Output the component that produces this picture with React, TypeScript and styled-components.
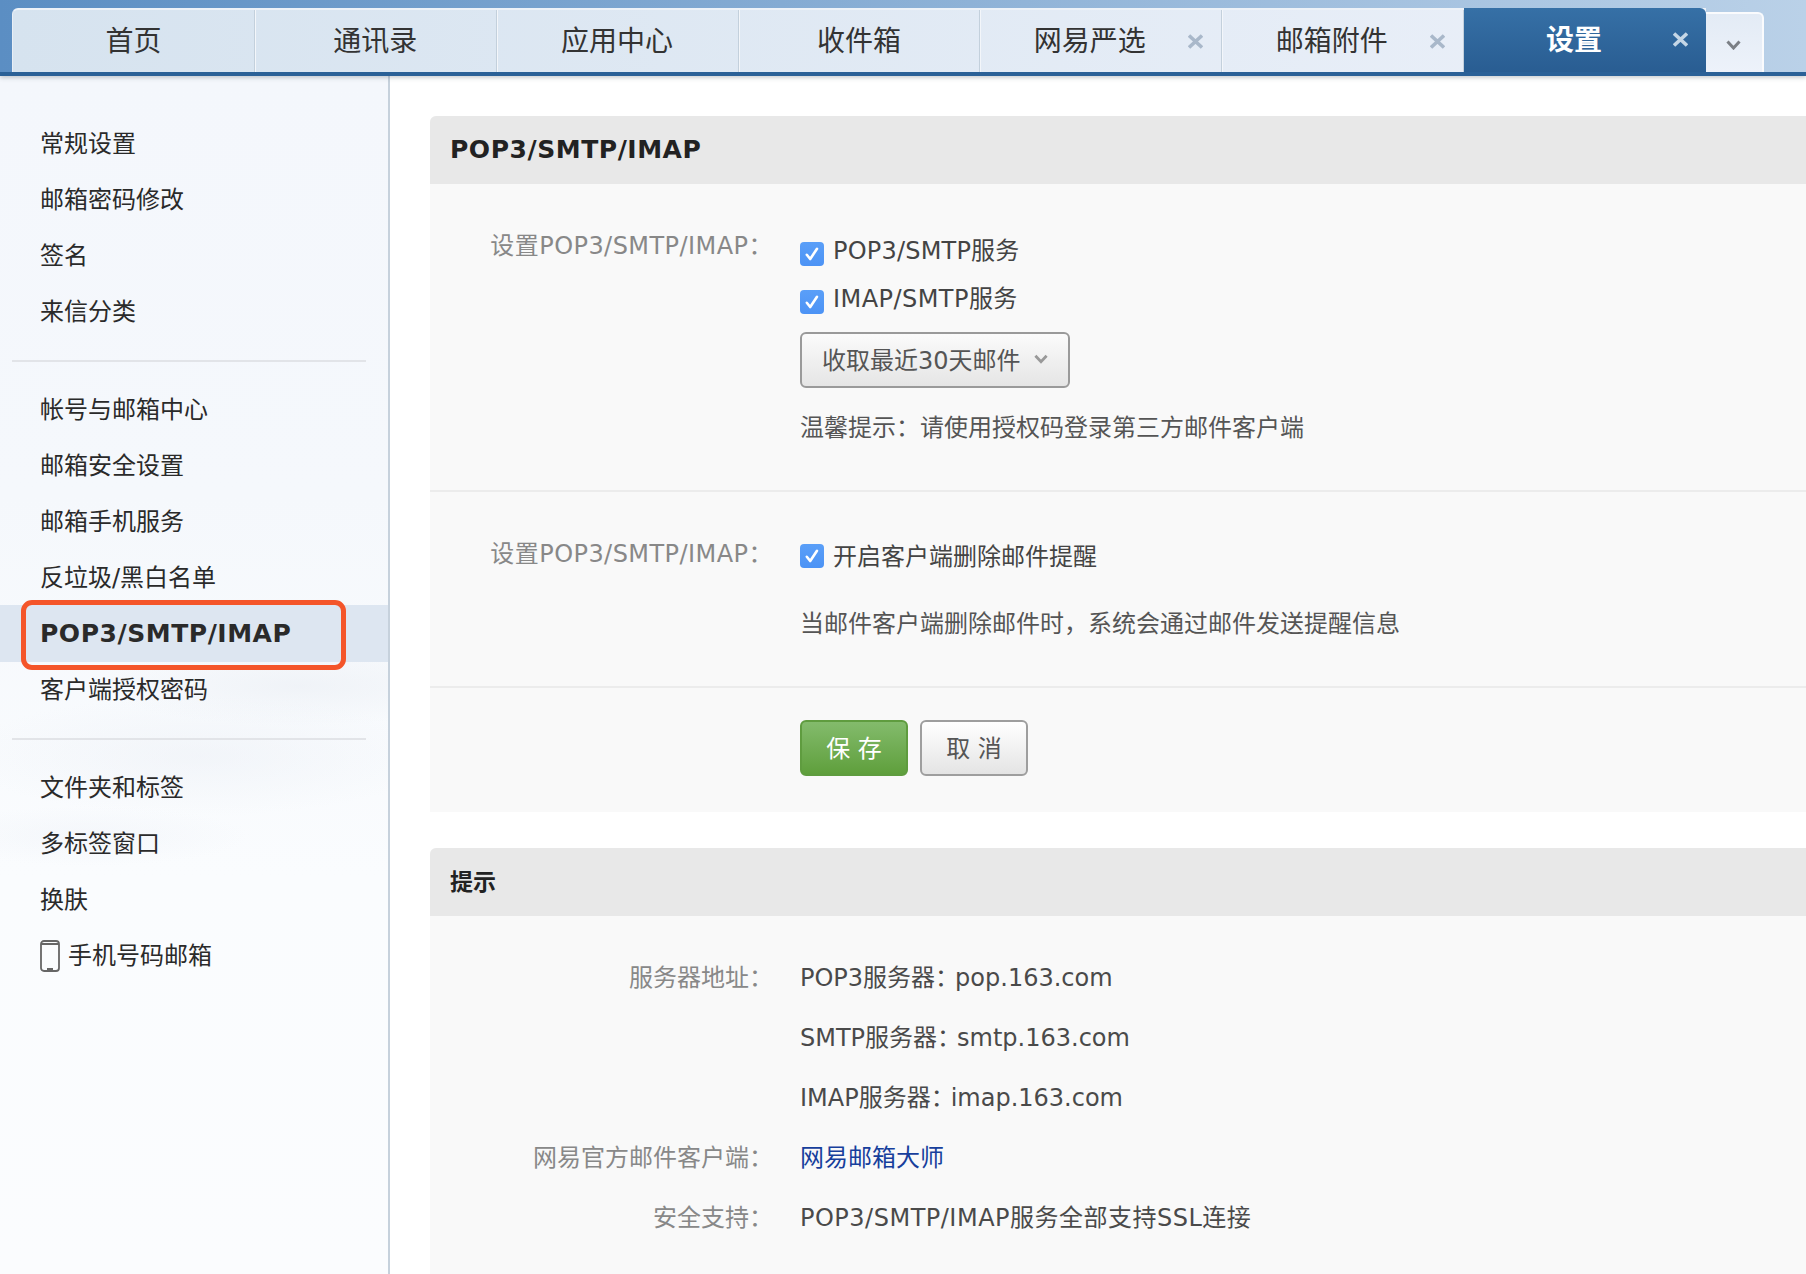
import React from "react";
import styled, { createGlobalStyle } from "styled-components";

const Global = createGlobalStyle`
  html, body { margin: 0; padding: 0; background: #fff; }
  body {
    width: 1806px; height: 1274px; overflow: hidden;
    font-family: "DejaVu Sans", "Noto Sans CJK SC", sans-serif;
    font-size: 24px; color: #333;
  }
  * { box-sizing: border-box; }
`;

const Page = styled.div`
  width: 1806px; height: 1274px; display: flex; flex-direction: column; overflow: hidden;
`;

const TopBar = styled.header`
  flex: none; height: 76px; padding: 8px 0 0 12px; display: flex; align-items: flex-end;
  background: linear-gradient(to right, #5b8ec3, #bad1e8);
  border-bottom: 4px solid #2b6197;
  box-shadow: 0 2px 4px rgba(60, 70, 80, .25);
  position: relative; z-index: 2;
`;

const TabStrip = styled.nav`
  display: flex; height: 64px;
  background: linear-gradient(to right, #d6e3ef, #ebf0f9);
  border-top: 2px solid #edf2f8;
  border-left: 1px solid #e8eef5;
  border-radius: 6px 0 0 0;
`;

const Tab = styled.div<{ $active?: boolean; $closable?: boolean }>`
  width: 241.85px; height: ${p => (p.$active ? "64px" : "62px")};
  margin-top: ${p => (p.$active ? "-2px" : "0")};
  display: flex; align-items: center; justify-content: center; position: relative;
  padding-right: ${p => (p.$closable ? "22px" : "0")};
  font-size: 28px; padding-bottom: 4px;
  font-weight: ${p => (p.$active ? 700 : 400)};
  color: ${p => (p.$active ? "#fff" : "#333")};
  background: ${p => (p.$active ? "linear-gradient(#3670a6, #295d92)" : "transparent")};
  border-radius: ${p => (p.$active ? "0 6px 0 0" : "0")};
  border-right: ${p => (p.$active ? "none" : "1px solid #c3d0dc")};
  box-shadow: ${p => (p.$active ? "none" : "1px 0 0 #f3f6fa")};
`;

const CloseIcon = styled.svg`
  position: absolute; right: 18px; top: 24px; width: 15px; height: 15px;
`;

const MoreTab = styled.div`
  width: 58px; height: 60px; display: flex; align-items: center; justify-content: center;
  padding: 4px 0 0 0;
  background: linear-gradient(#e3ebf5, #edf2fa);
  border-top: 2px solid #fafbfd; border-right: 2px solid #fafbfd;
  border-radius: 0 6px 0 0;
`;

const Body = styled.div`
  flex: 1; display: flex; min-height: 0;
`;

const Sidebar = styled.aside`
  flex: none; width: 390px; padding-top: 39px;
  border-right: 2px solid #c6d1dc;
  background:
    radial-gradient(ellipse 200px 40px at 300px 610px, rgba(232,236,242,.5), transparent),
    radial-gradient(ellipse 240px 60px at 200px 680px, rgba(234,238,244,.45), transparent),
    radial-gradient(ellipse 160px 30px at 90px 760px, rgba(236,240,246,.4), transparent),
    linear-gradient(#f4f7fc 0, #f5f8fc 420px, #fafcfe 800px, #fbfcfe 100%);
`;

const NavItem = styled.div<{ $selected?: boolean }>`
  height: 56px; display: flex; align-items: center; padding-left: 40px; position: relative;
  color: #2a2a2a;
  font-weight: ${p => (p.$selected ? 700 : 400)};
  background: ${p => (p.$selected ? "#dde6f1" : "transparent")};
  box-shadow: ${p => (p.$selected ? "0 1px 0 #dde6f1" : "none")};
  font-size: ${p => (p.$selected ? "25px" : "24px")};
  letter-spacing: ${p => (p.$selected ? ".55px" : "0")};
  padding-bottom: ${p => (p.$selected ? "0" : "4px")};
`;

const Highlight = styled.div`
  position: absolute; left: 21px; top: -5px; width: 325px; height: 70px;
  border: 5.5px solid #f4552a; border-radius: 11px;
`;

const PhoneIcon = styled.svg`
  width: 20px; height: 32px; margin-right: 8px; flex: none; margin-top: 6px;
`;

const NavDivider = styled.div`
  height: 2px; margin: 21px 22px 19px 12px; background: #e2e4e8;
`;

const Main = styled.main`
  flex: 1; min-width: 0; padding: 40px 0 0 40px; background: #fff; display: flex; flex-direction: column;
`;

const Panel = styled.section<{ $fill?: boolean }>`
  background: #f9f9f9; border-radius: 6px 0 0 0; overflow: hidden;
  flex: ${p => (p.$fill ? "1" : "none")};
  & + & { margin-top: 36px; }
`;

const PanelHead = styled.h2<{ $small?: boolean }>`
  margin: 0; height: 68px; display: flex; align-items: center; padding: 0 0 ${p => (p.$small ? "4px" : "2px")} 20px;
  background: #e8e8e8; color: #222; font-weight: 700;
  font-size: ${p => (p.$small ? "23px" : "25px")};
  letter-spacing: ${p => (p.$small ? "0" : ".55px")};
`;

const Section = styled.div<{ $bottom: number }>`
  padding: 36px 0 ${p => p.$bottom}px;
  border-bottom: 2px solid #ececec;
`;

const FormRow = styled.div`
  display: grid; grid-template-columns: 343px 1fr; column-gap: 27px;
`;

const Label = styled.div`
  line-height: 52px; text-align: right; color: #888; white-space: nowrap; letter-spacing: .45px;
`;

const Controls = styled.div<{ $top: number }>`
  padding-top: ${p => p.$top}px; color: #4a4a4a;
`;

const CheckRow = styled.label<{ $lift: number; $tracking?: number }>`
  display: flex; align-items: center; height: 48px; gap: 9px; color: #444;
  & > span {
    margin-bottom: ${p => p.$lift}px;
    letter-spacing: ${p => p.$tracking ?? 0}px;
  }
`;

const CheckBox = styled.i`
  width: 24px; height: 24px; flex: none; display: flex; align-items: center; justify-content: center;
  background: linear-gradient(#5a9ff8, #4c93f5); border-radius: 4px;
`;

const Select = styled.div`
  width: 270px; height: 56px; margin-top: 6px; padding: 0 0 3px 20px; display: flex; align-items: center; gap: 13px;
  border: 2px solid #9a9a9a; border-radius: 6px; color: #555;
  background: linear-gradient(#fbfbfb, #e5e5e5);
`;

const Note = styled.p<{ $gap: number }>`
  margin: ${p => p.$gap}px 0 0; line-height: 50px; color: #555;
`;

const Actions = styled.div`
  display: flex; gap: 12px; padding: 32px 0 36px 370px;
`;

const Btn = styled.div<{ $primary?: boolean }>`
  width: 108px; height: 56px; display: flex; align-items: center; justify-content: center;
  border-radius: 6px; white-space: pre; padding-bottom: 3px;
  color: ${p => (p.$primary ? "#fff" : "#555")};
  border: 2px solid ${p => (p.$primary ? "#5f9c3f" : "#9e9e9e")};
  background: ${p => (p.$primary ? "linear-gradient(#83bb6c, #5f9f3c)" : "linear-gradient(#fff, #e4e4e4)")};
`;

const InfoBody = styled.div`
  padding-top: 29px;
`;

const InfoRow = styled.div`
  display: grid; grid-template-columns: 343px 1fr; column-gap: 27px; height: 60px; align-items: center;
`;

const InfoLabel = styled.div`
  color: #888; text-align: right; white-space: nowrap;
`;

const InfoValue = styled.div<{ $tracking?: number }>`
  color: #4a4a4a; white-space: nowrap; letter-spacing: ${p => p.$tracking ?? 0}px;
`;

const TightColon = styled.span`
  letter-spacing: -4px;
`;

const LinkText = styled.a`
  color: #173f9c; text-decoration: none;
`;

const Close = ({ color }: { color: string }) => (
  <CloseIcon viewBox="0 0 15 15">
    <path d="M1 1.5 L14 13.5 M14 1.5 L1 13.5" stroke={color} strokeWidth="3.6" fill="none" />
  </CloseIcon>
);

const Check = () => (
  <svg width="16" height="16" viewBox="0 0 16 16">
    <path d="M2.8 8.8 L6.2 13 L13 2.8" stroke="#fff" strokeWidth="2.6" fill="none" strokeLinecap="round" strokeLinejoin="round" />
  </svg>
);

const Chevron = ({ color, w, h }: { color: string; w: number; h: number }) => (
  <svg width={w} height={h} viewBox="0 0 15 10">
    <path d="M1.5 1.5 L7.5 8 L13.5 1.5" stroke={color} strokeWidth="3" fill="none" />
  </svg>
);

const tabs: { name: string; closable?: boolean; active?: boolean }[] = [
  { name: "首页" }, { name: "通讯录" }, { name: "应用中心" }, { name: "收件箱" },
  { name: "网易严选", closable: true }, { name: "邮箱附件", closable: true },
  { name: "设置", closable: true, active: true },
];

const groupA = ["常规设置", "邮箱密码修改", "签名", "来信分类"];
const groupB = ["帐号与邮箱中心", "邮箱安全设置", "邮箱手机服务", "反垃圾/黑白名单"];
const groupC = ["文件夹和标签", "多标签窗口", "换肤"];

export default function App() {
  return (
    <Page>
      <Global />
      <TopBar>
        <TabStrip>
          {tabs.map(t => (
            <Tab key={t.name} $active={t.active} $closable={t.closable}>
              {t.name}
              {t.closable && <Close color={t.active ? "#c4d6e6" : "#a9b8ca"} />}
            </Tab>
          ))}
        </TabStrip>
        <MoreTab><Chevron color="#7b7f85" w={15} h={10} /></MoreTab>
      </TopBar>
      <Body>
        <Sidebar>
          {groupA.map(n => <NavItem key={n}>{n}</NavItem>)}
          <NavDivider />
          {groupB.map(n => <NavItem key={n}>{n}</NavItem>)}
          <NavItem $selected>POP3/SMTP/IMAP<Highlight /></NavItem>
          <NavItem>客户端授权密码</NavItem>
          <NavDivider />
          {groupC.map(n => <NavItem key={n}>{n}</NavItem>)}
          <NavItem>
            <PhoneIcon viewBox="0 0 20 32">
              <rect x="1" y="1" width="18" height="30" rx="3" fill="none" stroke="#666" strokeWidth="1.8" />
              <path d="M1 4 H19 M7 29 H13" stroke="#666" strokeWidth="1.8" />
            </PhoneIcon>
            手机号码邮箱
          </NavItem>
        </Sidebar>
        <Main>
          <Panel>
            <PanelHead>POP3/SMTP/IMAP</PanelHead>
            <Section $bottom={37}>
              <FormRow>
                <Label>设置POP3/SMTP/IMAP：</Label>
                <Controls $top={10}>
                  <CheckRow $lift={12} $tracking={.2}><CheckBox><Check /></CheckBox><span>POP3/SMTP服务</span></CheckRow>
                  <CheckRow $lift={12} $tracking={.45}><CheckBox><Check /></CheckBox><span>IMAP/SMTP服务</span></CheckRow>
                  <Select>收取最近30天邮件<Chevron color="#999" w={14} h={10} /></Select>
                  <Note $gap={15}>温馨提示：请使用授权码登录第三方邮件客户端</Note>
                </Controls>
              </FormRow>
            </Section>
            <Section $bottom={37}>
              <FormRow>
                <Label>设置POP3/SMTP/IMAP：</Label>
                <Controls $top={4}>
                  <CheckRow $lift={4}><CheckBox><Check /></CheckBox><span>开启客户端删除邮件提醒</span></CheckRow>
                  <Note $gap={19}>当邮件客户端删除邮件时，系统会通过邮件发送提醒信息</Note>
                </Controls>
              </FormRow>
            </Section>
            <Actions>
              <Btn $primary>保 存</Btn>
              <Btn>取 消</Btn>
            </Actions>
          </Panel>
          <Panel $fill>
            <PanelHead $small>提示</PanelHead>
            <InfoBody>
              <InfoRow><InfoLabel>服务器地址：</InfoLabel><InfoValue>POP3服务器<TightColon>：</TightColon>pop.163.com</InfoValue></InfoRow>
              <InfoRow><InfoLabel /><InfoValue>SMTP服务器<TightColon>：</TightColon>smtp.163.com</InfoValue></InfoRow>
              <InfoRow><InfoLabel /><InfoValue>IMAP服务器<TightColon>：</TightColon>imap.163.com</InfoValue></InfoRow>
              <InfoRow><InfoLabel>网易官方邮件客户端：</InfoLabel><InfoValue><LinkText>网易邮箱大师</LinkText></InfoValue></InfoRow>
              <InfoRow><InfoLabel>安全支持：</InfoLabel><InfoValue $tracking={.5}>POP3/SMTP/IMAP服务全部支持SSL连接</InfoValue></InfoRow>
            </InfoBody>
          </Panel>
        </Main>
      </Body>
    </Page>
  );
}
